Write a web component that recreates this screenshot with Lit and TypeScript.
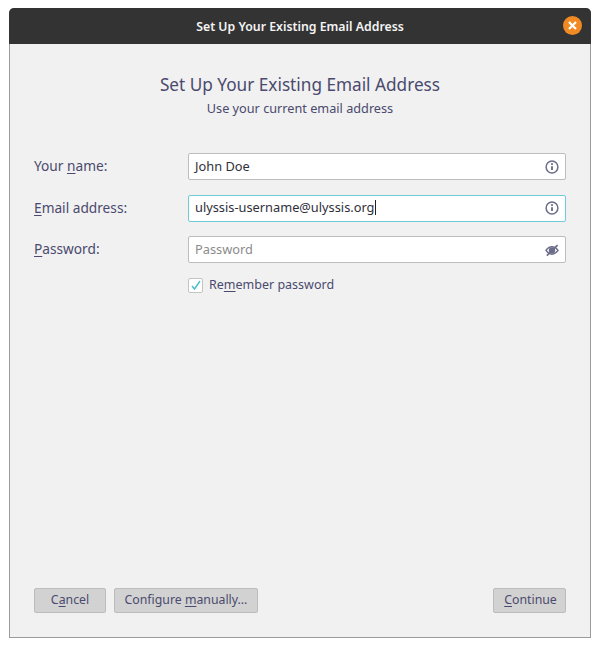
import { LitElement, html, css } from "lit";
import { customElement } from "lit/decorators.js";

const infoIcon = html`<svg class="icon" width="14" height="14" viewBox="0 0 14 14" fill="none" stroke="currentColor">
  <circle cx="7" cy="7" r="5.900" stroke-width="1.500" />
  <path d="M7 6.200v3.900" stroke-width="1.900" />
  <circle cx="7" cy="4.100" r="1.100" fill="currentColor" stroke="none" />
</svg>`;

const eyeIcon = html`<svg class="icon" width="14" height="14" viewBox="0 0 15 14" fill="none" stroke="currentColor">
  <path d="M1 7.500C3 4.600 5.200 3.500 7.500 3.500S12 4.600 14 7.500C12 10.300 9.800 11.500 7.500 11.500S3 10.300 1 7.500z" stroke-width="1.500" />
  <circle cx="7.500" cy="7.500" r="3.400" fill="currentColor" stroke="none" />
  <path d="M2 13L13.500 1.800" stroke-width="1.900" />
</svg>`;

@customElement("app-root")
export class AppRoot extends LitElement {
  static styles = css`
    :host {
      display: block;
      background: #fff;
      height: 647px;
      padding: 8px 9px 0;
      box-sizing: border-box;
      font-family: "Noto Sans", "Open Sans", sans-serif;
      color: #4a4a6e;
    }

    .window {
      height: 630px;
      display: flex;
      flex-direction: column;
      box-sizing: border-box;
      border: 1px solid #9b9b9b;
      border-top: none;
      border-radius: 5px 5px 0 0;
      background: #f1f1f1;
    }

    .titlebar {
      height: 36px;
      flex: none;
      margin: 0 -1px;
      display: flex;
      align-items: center;
      justify-content: center;
      position: relative;
      background: #333333;
      border-radius: 5px 5px 0 0;
      color: #f4f4f4;
      font-size: 12.300px;
      font-weight: 600;
    }

    .close {
      position: absolute;
      right: 9px;
      top: 8px;
      width: 19px;
      height: 19px;
      border-radius: 50%;
      background: #f28a24;
      display: flex;
      align-items: center;
      justify-content: center;
    }

    .body {
      flex: 1;
      display: flex;
      flex-direction: column;
      padding: 28px 24px 24px;
    }

    h1 {
      margin: 0;
      font-size: 17.200px;
      font-weight: 400;
      line-height: 26px;
      text-align: center;
    }

    .sub {
      margin: 1px 0 0;
      font-size: 12.700px;
      line-height: 18px;
      text-align: center;
    }

    .form {
      margin-top: 36.400px;
      display: grid;
      grid-template-columns: 154px 378px;
      row-gap: 14.500px;
      align-items: center;
      font-size: 13.700px;
    }

    label {
      padding-bottom: 2px;
    }

    .field {
      height: 27px;
      box-sizing: border-box;
      border: 1px solid #bdbdbd;
      border-radius: 2px;
      background: #fff;
      display: flex;
      align-items: center;
      justify-content: space-between;
      padding: 0 6px 2px 6px;
      font-size: 12.800px;
      color: #2f2f3a;
    }

    .field.focus {
      border-color: #6fcbd8;
    }

    .field.placeholder {
      color: #8b8b8b;
    }

    .caret {
      display: inline-block;
      width: 1px;
      height: 15px;
      background: #222;
      vertical-align: -3px;
    }

    .icon {
      color: #6d6d8a;
      flex: none;
      margin-top: 2px;
    }

    .remember {
      grid-column: 2;
      display: flex;
      align-items: center;
      gap: 6px;
      font-size: 12.500px;
      margin-top: -2px;
    }

    .remember .text {
      padding-bottom: 2px;
    }

    .checkbox {
      width: 15px;
      height: 15px;
      box-sizing: border-box;
      border: 1px solid #c4c4c4;
      border-radius: 2px;
      background: #fff;
      display: flex;
      align-items: center;
      justify-content: center;
    }

    .actions {
      margin-top: auto;
      display: flex;
      gap: 8px;
    }

    button {
      height: 25px;
      box-sizing: border-box;
      border: 1px solid #bcbcbc;
      border-radius: 2px;
      background: #d2d2d2;
      color: #4a4a6e;
      font: inherit;
      font-size: 12.300px;
      padding: 0 0 2px;
    }

    .cancel {
      width: 72px;
    }

    .manual {
      width: 144px;
    }

    .continue {
      width: 73px;
      margin-left: auto;
      padding-left: 2px;
    }

    u {
      text-underline-offset: 2px;
    }
  `;

  render() {
    return html`<div class="window">
      <div class="titlebar">
        Set Up Your Existing Email Address
        <span class="close">
          <svg width="9" height="9" viewBox="0 0 9 9" stroke="#fff" stroke-width="2.200">
            <path d="M1 1l7 7M8 1l-7 7" />
          </svg>
        </span>
      </div>
      <div class="body">
        <h1>Set Up Your Existing Email Address</h1>
        <p class="sub">Use your current email address</p>
        <div class="form">
          <label>Your <u>n</u>ame:</label>
          <div class="field"><span>John Doe</span>${infoIcon}</div>
          <label><u>E</u>mail address:</label>
          <div class="field focus">
            <span>ulyssis-username@ulyssis.org<i class="caret"></i></span>${infoIcon}
          </div>
          <label><u>P</u>assword:</label>
          <div class="field placeholder"><span>Password</span>${eyeIcon}</div>
          <div class="remember">
            <span class="checkbox">
              <svg width="12" height="12" viewBox="0 0 12 12" fill="none" stroke="#4dbfd0" stroke-width="1.500">
                <path d="M2 7l2.500 3L10 2" />
              </svg>
            </span>
            <span class="text">Re<u>m</u>ember password</span>
          </div>
        </div>
        <div class="actions">
          <button class="cancel">C<u>a</u>ncel</button>
          <button class="manual">Configure <u>m</u>anually...</button>
          <button class="continue"><u>C</u>ontinue</button>
        </div>
      </div>
    </div>`;
  }
}
